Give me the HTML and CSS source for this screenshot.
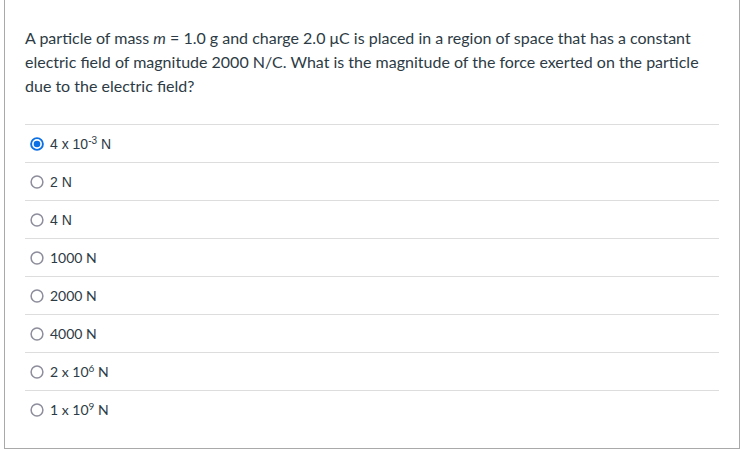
FILE: index.html
```html
<!DOCTYPE html>
<html lang="en">
<head>
    <meta charset="UTF-8">
    <title>Question</title>
    <link rel="stylesheet" href="styles.css">
</head>
<body>
    <div class="question-box">
        <p class="question-text">A particle of mass <i>m</i> = 1.0 g and charge 2.0 &mu;C is placed in a region of space that has a constant electric field of magnitude 2000 N/C. What is the magnitude of the force exerted on the particle due to the electric field?</p>

        <div class="answers">
            <label class="answer">
                <svg class="radio" width="14" height="14" viewBox="0 0 14 14"><circle cx="7" cy="7" r="5.9" fill="#fff" stroke="#0b6fe6" stroke-width="1.9"/><circle cx="7" cy="7" r="3.3" fill="#0b6fe6"/></svg>
                <span class="arial">4 x 10<sup>-3</sup> N</span>
            </label>
            <label class="answer">
                <svg class="radio" width="14" height="14" viewBox="0 0 14 14"><circle cx="7" cy="7" r="5.9" fill="#fff" stroke="#8d8d9c" stroke-width="1.5"/></svg>
                <span class="arial">2 N</span>
            </label>
            <label class="answer">
                <svg class="radio" width="14" height="14" viewBox="0 0 14 14"><circle cx="7" cy="7" r="5.9" fill="#fff" stroke="#8d8d9c" stroke-width="1.5"/></svg>
                <span class="arial">4 N</span>
            </label>
            <label class="answer">
                <svg class="radio" width="14" height="14" viewBox="0 0 14 14"><circle cx="7" cy="7" r="5.9" fill="#fff" stroke="#8d8d9c" stroke-width="1.5"/></svg>
                <span>1000 N</span>
            </label>
            <label class="answer">
                <svg class="radio" width="14" height="14" viewBox="0 0 14 14"><circle cx="7" cy="7" r="5.9" fill="#fff" stroke="#8d8d9c" stroke-width="1.5"/></svg>
                <span>2000 N</span>
            </label>
            <label class="answer">
                <svg class="radio" width="14" height="14" viewBox="0 0 14 14"><circle cx="7" cy="7" r="5.9" fill="#fff" stroke="#8d8d9c" stroke-width="1.5"/></svg>
                <span>4000 N</span>
            </label>
            <label class="answer">
                <svg class="radio" width="14" height="14" viewBox="0 0 14 14"><circle cx="7" cy="7" r="5.9" fill="#fff" stroke="#8d8d9c" stroke-width="1.5"/></svg>
                <span>2 x 10<sup>6</sup> N</span>
            </label>
            <label class="answer">
                <svg class="radio" width="14" height="14" viewBox="0 0 14 14"><circle cx="7" cy="7" r="5.9" fill="#fff" stroke="#8d8d9c" stroke-width="1.5"/></svg>
                <span>1 x 10<sup>9</sup> N</span>
            </label>
        </div>
    </div>
</body>
</html>
```
FILE: styles.css
```css
body {
    margin: 0;
    padding: 0;
    background-color: #fff;
    font-family: Lato, "Open Sans", sans-serif;
    color: #2d3b45;
}

.question-box {
    margin-left: 4px;
    width: 734px;
    height: 448px;
    border: 1px solid #a9a9a9;
    border-top: none;
}

.question-text {
    margin: 0;
    padding: 26px 20px 0 20px;
    font-size: 16px;
    line-height: 24px;
}

.answers {
    margin: 26px 20px 0 20px;
}

.answer {
    display: flex;
    align-items: center;
    height: 37px;
    border-top: 1px solid #dddddd;
    padding-left: 5px;
    font-size: 14px;
}

.radio {
    flex: none;
    margin-right: 6px;
    margin-top: 1px;
}

.arial {
    font-family: "Liberation Sans", Arial, sans-serif;
    font-size: 14px;
}

sup {
    font-size: 10px;
    line-height: 0;
    vertical-align: 5px;
}
```
